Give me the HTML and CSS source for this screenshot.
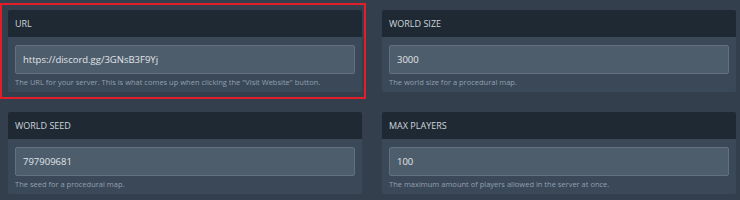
FILE: index.html
```html
<!DOCTYPE html>
<html>
<head>
<meta charset="utf-8">
<link rel="stylesheet" href="styles.css">
</head>
<body>
<div class="grid">
  <div class="card highlighted">
    <div class="card-head">URL</div>
    <div class="card-body">
      <div class="input">https://discord.gg/3GNsB3F9Yj</div>
      <div class="help">The URL for your server. This is what comes up when clicking the "Visit Website" button.</div>
    </div>
    <div class="highlight"></div>
  </div>
  <div class="card">
    <div class="card-head">WORLD SIZE</div>
    <div class="card-body">
      <div class="input">3000</div>
      <div class="help">The world size for a procedural map.</div>
    </div>
  </div>
  <div class="card">
    <div class="card-head">WORLD SEED</div>
    <div class="card-body">
      <div class="input">797909681</div>
      <div class="help">The seed for a procedural map.</div>
    </div>
  </div>
  <div class="card">
    <div class="card-head">MAX PLAYERS</div>
    <div class="card-body">
      <div class="input">100</div>
      <div class="help">The maximum amount of players allowed in the server at once.</div>
    </div>
  </div>
</div>
</body>
</html>
```
FILE: styles.css
```css
html, body {
  margin: 0;
  padding: 0;
}
body {
  width: 740px;
  height: 200px;
  background: #333f4c;
  font-family: "Open Sans", "Noto Sans", sans-serif;
  overflow: hidden;
}
.grid {
  display: grid;
  grid-template-columns: 354px 354px;
  column-gap: 20px;
  row-gap: 20px;
  padding: 10px 4px 0 8px;
}
.card {
  position: relative;
  background: #3b4857;
  border-radius: 2px;
}
.card-head {
  height: 27px;
  box-sizing: border-box;
  background: #1f2933;
  border-radius: 2px 2px 0 0;
  color: #cdd5dd;
  font-size: 9px;
  font-weight: 500;
  line-height: 27px;
  padding-left: 7px;
}
.card-body {
  padding: 8px 7px 5px 7px;
}
.input {
  height: 29px;
  box-sizing: border-box;
  background: #4e5d6c;
  border: 1px solid #627080;
  border-radius: 2px;
  color: #e0e5ea;
  font-size: 9.5px;
  font-weight: 500;
  line-height: 27px;
  padding-left: 7px;
}
.help {
  color: #8fa0b1;
  font-size: 7.5px;
  line-height: 10px;
  margin-top: 3px;
}
.highlight {
  position: absolute;
  left: -8px;
  top: -7px;
  right: -4px;
  bottom: -7px;
  border: 2px solid #e31e28;
}
```
